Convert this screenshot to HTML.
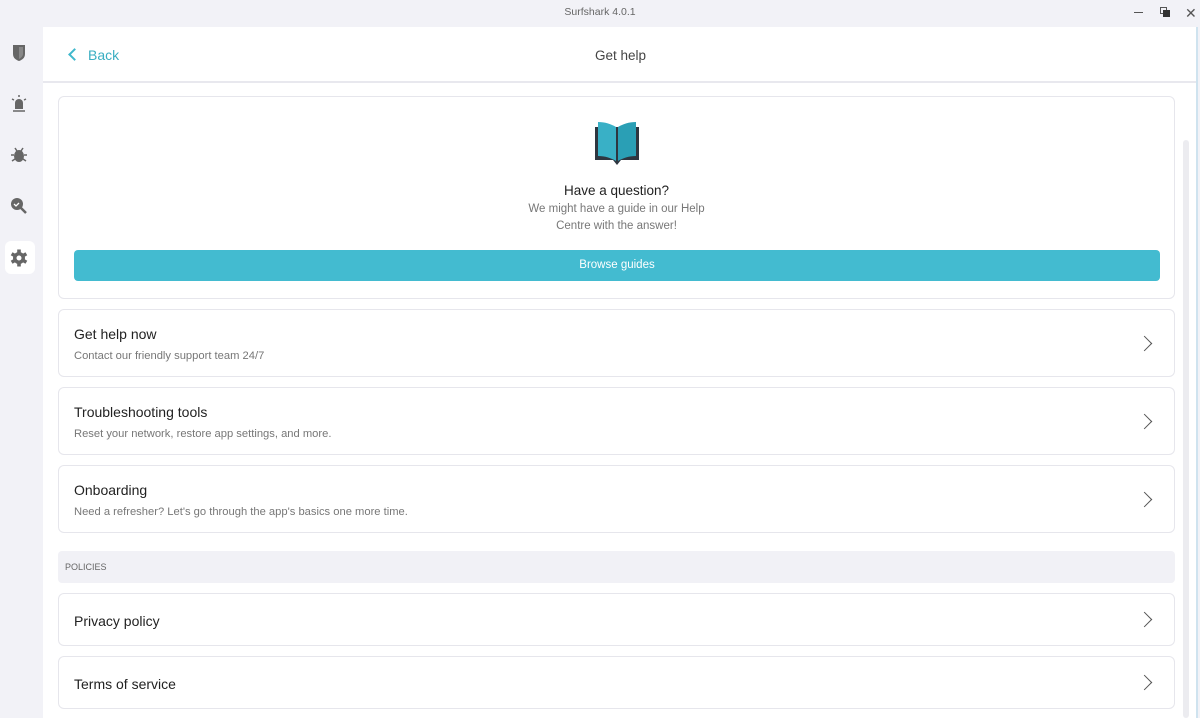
<!DOCTYPE html>
<html><head><style>
*{margin:0;padding:0;box-sizing:border-box}
body{width:1200px;height:718px;background:#f2f2f7;font-family:"Liberation Sans",sans-serif;position:relative;overflow:hidden;color:#222}
.title{position:absolute;top:0;left:0;width:1200px;height:27px;text-align:center;font-size:10.5px;line-height:25px;color:#666}
.main{position:absolute;left:43px;top:27px;width:1155px;height:691px;background:#fff}
.hdr{position:absolute;left:0;top:0;width:1155px;height:56px;border-bottom:2px solid #e8e8ee;background:#fff}
.card{position:absolute;left:15px;width:1117px;border:1px solid #e6e6ec;border-radius:6px;background:#fff}
.row .t{position:absolute;left:15px;font-size:14px;color:#222}
.row .s{position:absolute;left:15px;font-size:11.2px;color:#777}
.chev{position:absolute;right:24px;width:11px;height:11px;border-right:1.6px solid #555;border-top:1.6px solid #555;transform:rotate(45deg)}
.side svg{position:absolute;left:10px}
</style></head><body>
<div class="title">Surfshark 4.0.1</div>
<div style="position:absolute;left:1134px;top:12px;width:9px;height:1px;background:#555"></div>
<div style="position:absolute;left:1160px;top:7px;width:7px;height:7px;border:1px solid #555"></div>
<div style="position:absolute;left:1163px;top:10px;width:7px;height:7px;background:#333"></div>
<div style="position:absolute;left:1185px;top:5px;font-size:14px;color:#555">✕</div>
<div class="side">
<svg style="top:43px" width="18" height="20" viewBox="0 0 18 20"><path d="M3 2h12v9c0 4-3 6-6 7c-3-1-6-3-6-7z" fill="#666"/><path d="M9 4h4v7c0 2-2 4-4 5z" fill="#888"/></svg>
<svg style="top:94px" width="18" height="20" viewBox="0 0 18 20"><path d="M5 15v-6a4 4 0 0 1 8 0v6z" fill="#666"/><path d="M3 17h12M9 1v2M2 5l2 1M16 5l-2 1" stroke="#666" stroke-width="1.5"/></svg>
<svg style="top:145px" width="18" height="20" viewBox="0 0 18 20"><ellipse cx="9" cy="11" rx="5" ry="6" fill="#666"/><path d="M5 3l2 3M13 3l-2 3M1 10h3M14 10h3M2 16l3-2M16 16l-3-2" stroke="#666" stroke-width="1.5"/></svg>
<svg style="top:196px" width="18" height="20" viewBox="0 0 18 20"><circle cx="7" cy="8" r="6" fill="#666"/><path d="M11 12l5 5" stroke="#666" stroke-width="2.5"/><path d="M4 8l2 2 3-3" stroke="#fff" stroke-width="1.3" fill="none"/></svg>
<div style="position:absolute;left:5px;top:241px;width:30px;height:33px;background:#fff;border-radius:6px"></div>
<svg style="top:248px" width="18" height="20" viewBox="-9 -9 18 18"><g fill="#666"><circle r="6"/><rect x="-1.8" y="-8.5" width="3.6" height="17"/><rect x="-1.8" y="-8.5" width="3.6" height="17" transform="rotate(60)"/><rect x="-1.8" y="-8.5" width="3.6" height="17" transform="rotate(120)"/></g><circle r="2.5" fill="#fff"/></svg>
</div>
<div class="main">
<div class="hdr">
<div style="position:absolute;left:27px;top:23px;width:9px;height:9px;border-left:2px solid #3fb8cc;border-bottom:2px solid #3fb8cc;transform:rotate(45deg)"></div>
<div style="position:absolute;left:45px;top:20px;font-size:14px;color:#3aaec2">Back</div>
<div style="position:absolute;left:0;width:1155px;top:21px;text-align:center;font-size:13.5px;color:#444">Get help</div>
</div>
<div style="position:absolute;left:1140px;top:113px;width:6px;height:578px;background:#ececf0;border-radius:3px"></div>
<div style="position:absolute;right:0;top:0;width:2px;height:691px;background:#cfe3ef"></div>
<div class="card" style="top:69px;height:203px">
<svg style="position:absolute;left:535px;top:22px" width="46" height="48" viewBox="0 0 46 48"><path d="M1 8v33h18l4 5 4-5h18V8z" fill="#2e3640"/><path d="M4 3c7 0 13 2 18 5v34c-5-3-11-5-18-5z" fill="#39b0c6"/><path d="M42 3c-7 0-13 2-18 5v34c5-3 11-5 18-5z" fill="#2a9fb5"/></svg>
<div style="position:absolute;width:100%;top:86px;text-align:center;font-size:13.5px;color:#222">Have a question?</div>
<div style="position:absolute;width:100%;top:104px;text-align:center;font-size:11.5px;line-height:17px;color:#777">We might have a guide in our Help<br>Centre with the answer!</div>
<div style="position:absolute;left:15px;top:153px;width:1086px;height:31px;background:#43bbd0;border-radius:4px;color:#fff;font-size:11.5px;text-align:center;line-height:31px">Browse guides</div>
</div>
<div class="card row" style="top:282px;height:68px"><div class="t" style="top:16px">Get help now</div><div class="s" style="top:40px">Contact our friendly support team 24/7</div><div class="chev" style="top:28px"></div></div>
<div class="card row" style="top:360px;height:68px"><div class="t" style="top:16px">Troubleshooting tools</div><div class="s" style="top:40px">Reset your network, restore app settings, and more.</div><div class="chev" style="top:28px"></div></div>
<div class="card row" style="top:438px;height:68px"><div class="t" style="top:16px">Onboarding</div><div class="s" style="top:40px">Need a refresher? Let's go through the app's basics one more time.</div><div class="chev" style="top:28px"></div></div>
<div style="position:absolute;left:15px;top:524px;width:1117px;height:32px;background:#f1f1f6;border-radius:4px;font-size:9px;color:#666;line-height:33px;padding-left:7px">POLICIES</div>
<div class="card row" style="top:566px;height:53px"><div class="t" style="top:19px">Privacy policy</div><div class="chev" style="top:20px"></div></div>
<div class="card row" style="top:629px;height:53px"><div class="t" style="top:19px">Terms of service</div><div class="chev" style="top:20px"></div></div>
</div>
</body></html>
